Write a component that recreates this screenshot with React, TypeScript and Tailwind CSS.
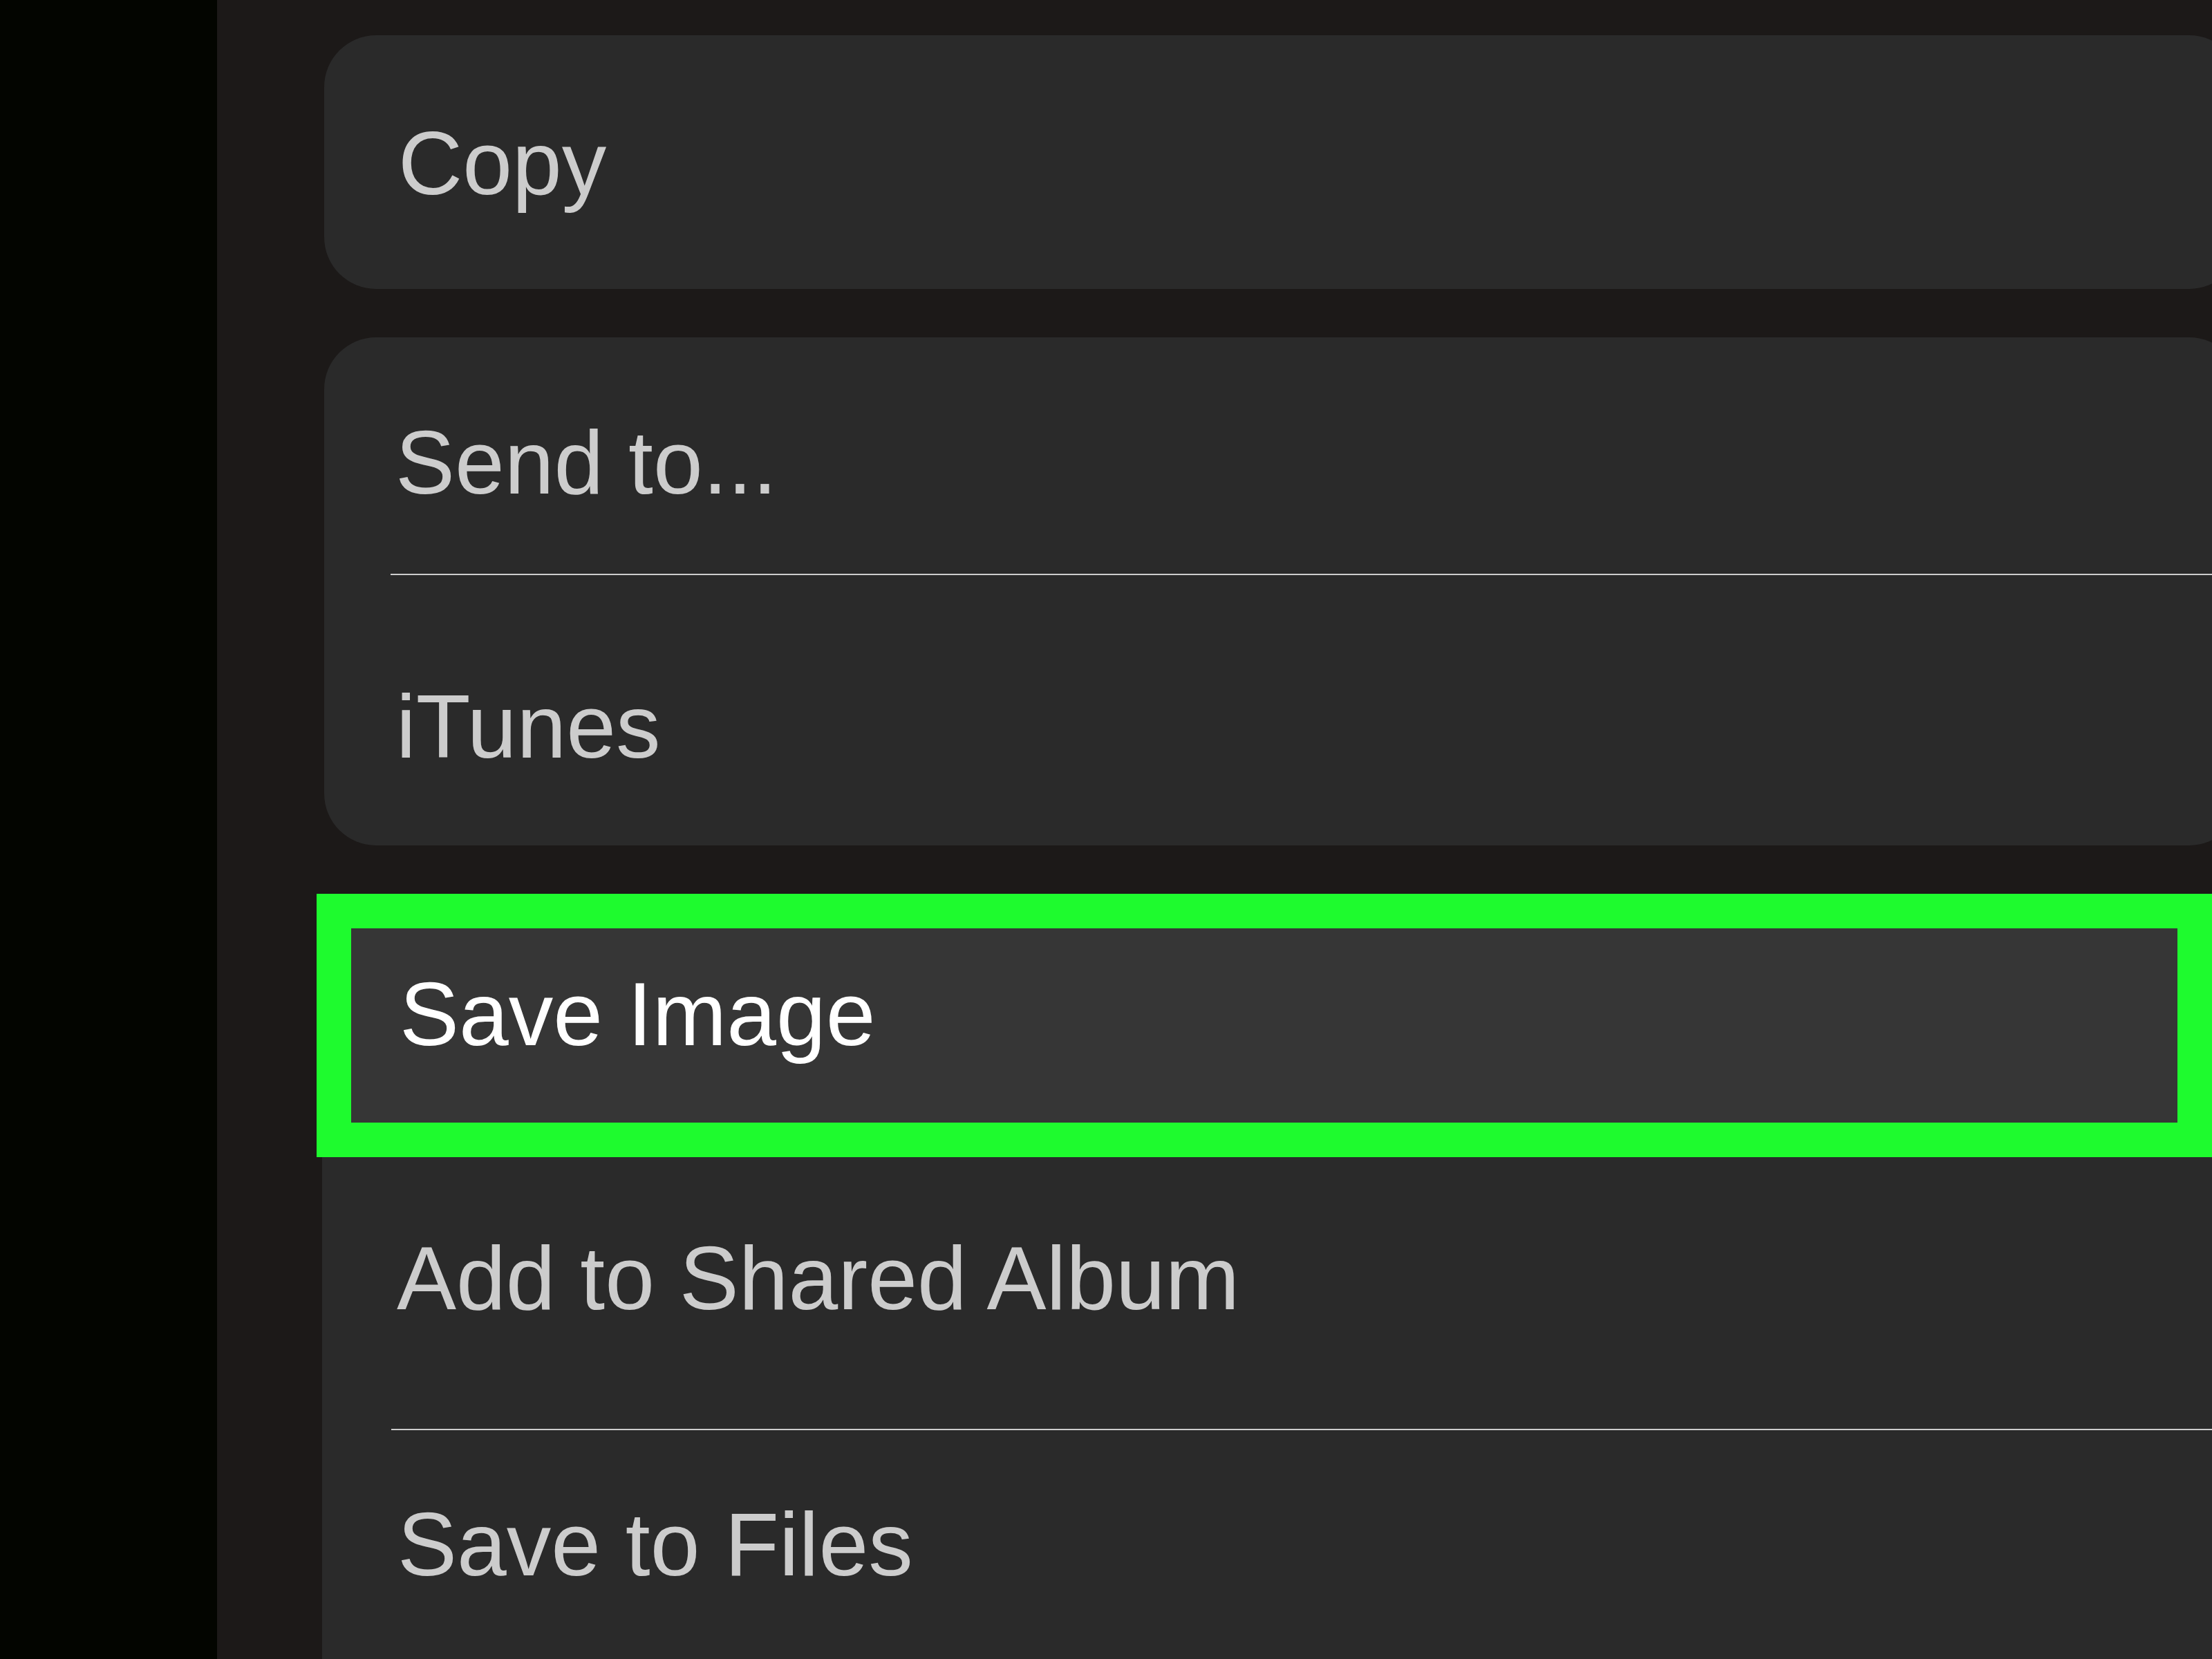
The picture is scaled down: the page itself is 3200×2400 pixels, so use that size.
import React from 'react'

const font = { fontFamily: '"Liberation Sans", Arial, sans-serif' }

export default function App() {
  return (
    <div className="w-[3200px] h-[2400px] overflow-hidden flex bg-[#1c1918]" style={font}>
      {/* dark left edge */}
      <div className="w-[314px] shrink-0 bg-[#030500]" />

      {/* share sheet list */}
      <div className="flex-1 flex flex-col gap-[70px] pt-[51px] pl-[155px]">
        <div className="w-[2773px] shrink-0 h-[367px] rounded-[75px] bg-[#2a2a2a] pl-[107px] pt-[120px]">
          <Label text="Copy" />
        </div>

        <div className="w-[2773px] shrink-0 rounded-[75px] bg-[#2a2a2a] flex flex-col">
          <div className="h-[342px] pl-[103px] pt-[116px]">
            <Label text="Send to..." />
          </div>
          <div className="ml-[96px] h-[2px] bg-[#cdcdcd]" />
          <div className="h-[391px] pl-[104px] pt-[154px]">
            <Label text="iTunes" />
          </div>
        </div>

        <div className="w-[2776px] shrink-0 -ml-[3px] rounded-t-[75px] bg-[#2a2a2a] flex flex-col">
          <div className="relative h-[381px]">
            <div className="absolute -left-[8px] top-0 w-[2742px] h-[381px] border-[50px] border-[#1efb2e] bg-[#363636] pl-[70px] pt-[59px]">
              <span className="block text-[129px] leading-[130px] text-white whitespace-nowrap">Save Image</span>
            </div>
          </div>
          <div className="h-[393px] pl-[108px] pt-[110px]">
            <Label text="Add to Shared Album" />
          </div>
          <div className="ml-[100px] h-[2px] bg-[#cdcdcd]" />
          <div className="h-[400px] pl-[109px] pt-[100px]">
            <Label text="Save to Files" />
          </div>
        </div>
      </div>
    </div>
  )
}

function Label({ text }: { text: string }) {
  return <span className="block text-[129px] leading-[130px] text-[#cccccc] whitespace-nowrap">{text}</span>
}
